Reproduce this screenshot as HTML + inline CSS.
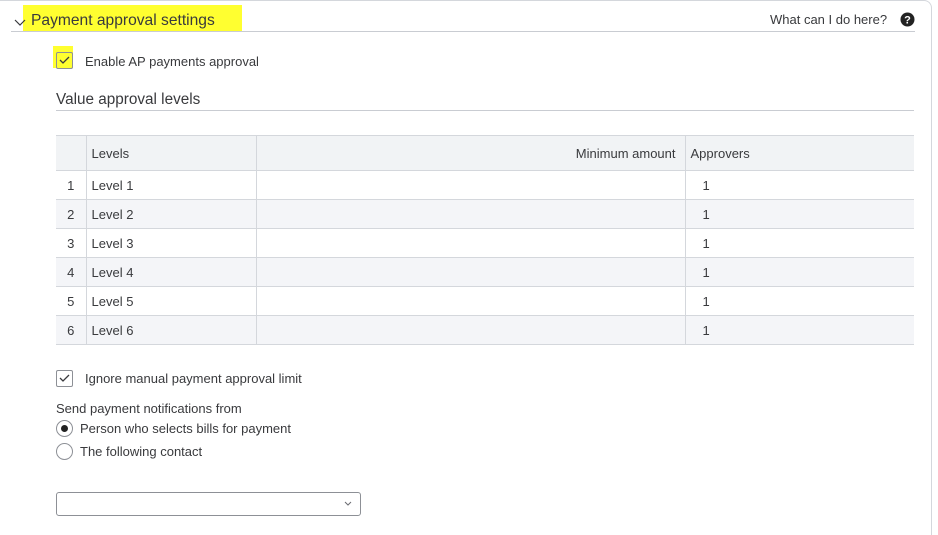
<!DOCTYPE html>
<html><head><style>
html,body{margin:0;width:938px;height:535px;overflow:hidden}
body{background:#fff;font-family:"Liberation Sans",sans-serif;color:#393a3d;position:relative}
.card{position:absolute;left:-5px;top:0;width:937px;height:535px;border:1px solid #d4d7dc;border-bottom:none;border-radius:0 8px 0 0;box-sizing:border-box}
.abs{position:absolute}
.hl{background:#ffff30}
table{border-collapse:collapse;table-layout:fixed;position:absolute;left:56px;top:135px;width:858px;font-size:13px}
td{border:1px solid #d4d7dc;height:28px;padding:0;color:#393a3d;white-space:nowrap}
td:first-child{border-left:none}
td:last-child{border-right:none}
tr.h td{background:#f1f3f5;height:34px}
tr.g td{background:#f4f5f8}
td.i{text-align:center}
td.l{padding-left:5px}
td.m{text-align:right;padding-right:9px}
td.a{padding-left:5px}
td.n{padding-left:17px}
.cb{position:absolute;width:15px;height:15px;border:1px solid #8d9096;border-radius:2px;background:#fff}
.rad{position:absolute;width:15px;height:15px;border:1px solid #8d9096;border-radius:50%;background:#fff}
</style></head><body>
<div class="card"></div>
<div class="abs hl" style="left:23px;top:5px;width:219px;height:27px"></div>
<div class="abs" style="left:11px;top:31px;width:904px;height:1px;background:#c9ccd2"></div>
<svg class="abs" style="left:14px;top:19px" width="12" height="8"><path d="M1 1 L6 6 L11 1" stroke="#393a3d" stroke-width="1.2" fill="none"/></svg>
<div class="abs" style="left:31px;top:12px;font-size:15.6px;color:#393a3d">Payment approval settings</div>
<div class="abs" style="left:770px;top:12px;font-size:13px">What can I do here?</div>
<svg class="abs" style="left:900px;top:12px" width="15" height="15"><circle cx="7.5" cy="7.5" r="7" fill="#222"/><text x="7.5" y="11.5" font-size="11" font-weight="bold" fill="#fff" text-anchor="middle" font-family="Liberation Sans">?</text></svg>
<div class="abs hl" style="left:53px;top:46px;width:20px;height:22px"></div>
<div class="cb" style="left:56px;top:52px;background:transparent"></div>
<svg class="abs" style="left:58px;top:54px" width="13" height="12"><path d="M2 6 L5 9 L11 3" stroke="#393a3d" stroke-width="1.3" fill="none"/></svg>
<div class="abs" style="left:85px;top:54px;font-size:13px">Enable AP payments approval</div>
<div class="abs" style="left:56px;top:91px;font-size:15.3px">Value approval levels</div>
<div class="abs" style="left:56px;top:110px;width:858px;height:1px;background:#c9ccd2"></div>
<table>
<colgroup><col style="width:30px"><col style="width:170px"><col style="width:429px"><col style="width:229px"></colgroup>
<tr class="h"><td class="i"></td><td class="l">Levels</td><td class="m">Minimum amount</td><td class="a">Approvers</td></tr>
<tr><td class="i">1</td><td class="l">Level 1</td><td class="m"></td><td class="n">1</td></tr>
<tr class="g"><td class="i">2</td><td class="l">Level 2</td><td class="m"></td><td class="n">1</td></tr>
<tr><td class="i">3</td><td class="l">Level 3</td><td class="m"></td><td class="n">1</td></tr>
<tr class="g"><td class="i">4</td><td class="l">Level 4</td><td class="m"></td><td class="n">1</td></tr>
<tr><td class="i">5</td><td class="l">Level 5</td><td class="m"></td><td class="n">1</td></tr>
<tr class="g"><td class="i">6</td><td class="l">Level 6</td><td class="m"></td><td class="n">1</td></tr>
</table>
<div class="cb" style="left:56px;top:370px"></div>
<svg class="abs" style="left:58px;top:372px" width="13" height="12"><path d="M2 6 L5 9 L11 3" stroke="#393a3d" stroke-width="1.3" fill="none"/></svg>
<div class="abs" style="left:85px;top:371px;font-size:13px">Ignore manual payment approval limit</div>
<div class="abs" style="left:56px;top:401px;font-size:13px">Send payment notifications from</div>
<div class="rad" style="left:56px;top:420px"></div>
<div class="abs" style="left:61px;top:425px;width:7px;height:7px;border-radius:50%;background:#222"></div>
<div class="abs" style="left:80px;top:421px;font-size:13px">Person who selects bills for payment</div>
<div class="rad" style="left:56px;top:443px"></div>
<div class="abs" style="left:80px;top:444px;font-size:13px">The following contact</div>
<div class="abs" style="left:56px;top:492px;width:303px;height:22px;border:1px solid #8d9096;border-radius:3px"></div>
<svg class="abs" style="left:344px;top:501px" width="8" height="5"><path d="M1 1 L4 4 L7 1" stroke="#6b6c72" stroke-width="1" fill="none"/></svg>
</body></html>
